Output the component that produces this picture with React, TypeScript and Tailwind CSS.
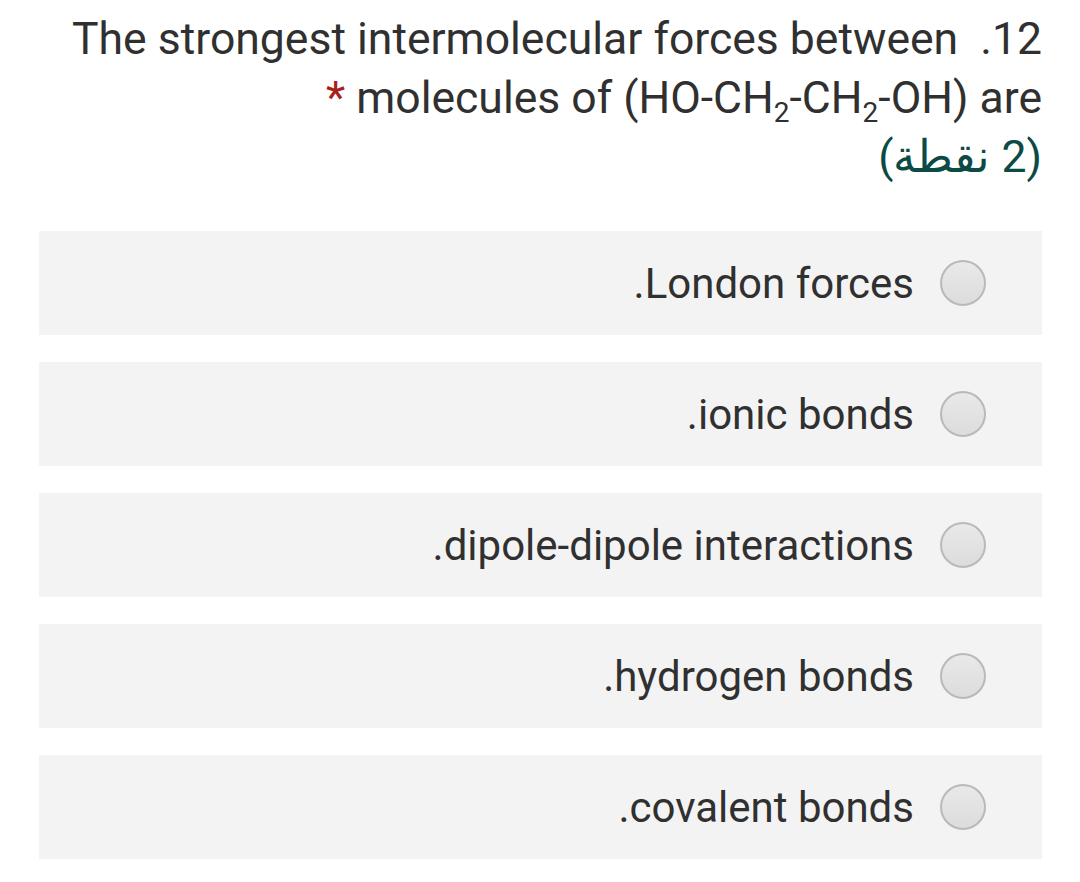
export default function App() {
  const options = [
    ".London forces",
    ".ionic bonds",
    ".dipole-dipole interactions",
    ".hydrogen bonds",
    ".covalent bonds",
  ];
  const Sub = () => (
    <sub className="text-[28px] relative top-[9px] align-baseline leading-none">2</sub>
  );
  return (
    <div
      className="w-[1080px] h-[882px] bg-white text-[#303030] overflow-hidden"
      style={{ fontFamily: "Roboto, 'Noto Sans', sans-serif" }}
    >
      <div className="pt-[10px] pr-[38px] text-right text-[44.5px] leading-[59px]">
        <div className="whitespace-pre">The strongest intermolecular forces between  .12</div>
        <div>
          <span className="text-[#a8201a]">*</span> molecules of (HO-CH<Sub />-CH<Sub />-OH) are
        </div>
        <div className="flex justify-end text-[#0b4a45]">
          <span dir="rtl">(2 نقطة)</span>
        </div>
      </div>
      <div className="mt-[44px] ml-[39px] w-[1003px] flex flex-col gap-[27px]">
        {options.map((o) => (
          <div
            key={o}
            className="h-[104px] bg-[#f3f3f3] flex items-center justify-end pr-[56px] gap-[26px]"
          >
            <span className="text-[42px]">{o}</span>
            <span className="w-[46px] h-[46px] rounded-full border-2 border-[#b9b9b9] bg-gradient-to-b from-[#e9e9e9] to-[#dcdcdc] shrink-0" />
          </div>
        ))}
      </div>
    </div>
  );
}
